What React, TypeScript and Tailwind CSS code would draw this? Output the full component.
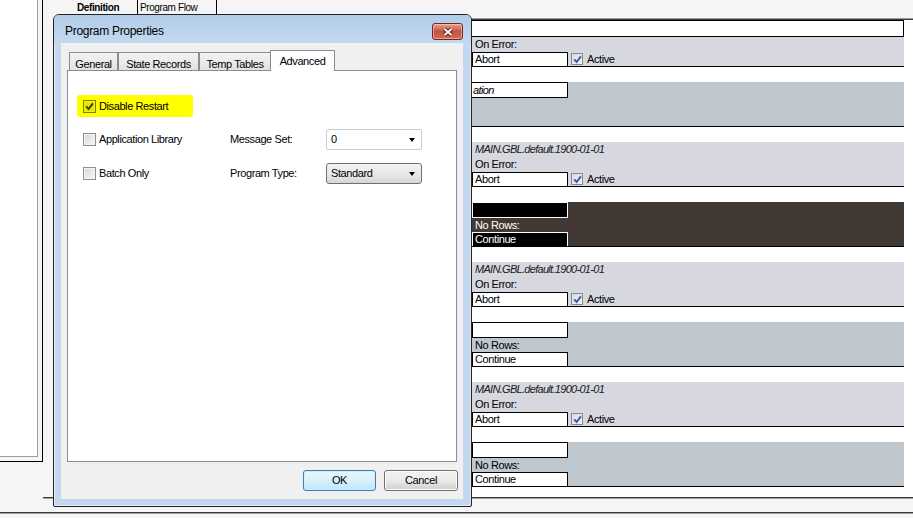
import React from "react";

function Tick({ color }: { color: string }) {
  return (
    <svg viewBox="0 0 9 9" className="h-[9px] w-[9px]">
      <path d="M1.2 4.4 L3.6 7 L7.9 1.4" fill="none" stroke={color} strokeWidth="1.9" />
    </svg>
  );
}

function Box({ checked, hl }: { checked?: boolean; hl?: boolean }) {
  return (
    <span
      className={`flex h-[13px] w-[13px] shrink-0 items-center justify-center border ${
        hl
          ? "border-[#7d7d00] bg-[#e6e600] shadow-[inset_0_0_0_1px_#f5f500]"
          : "border-[#8e8f8f] bg-gradient-to-br from-[#d6d6d6] to-[#fafafa] shadow-[inset_0_0_0_1px_#f4f4f4]"
      }`}
    >
      {checked && <Tick color={hl ? "#3c3c00" : "#4a5f97"} />}
    </span>
  );
}

function ActiveCheck() {
  return (
    <div className="ml-[3px] mt-px flex items-center">
      <span className="flex h-[12px] w-[12px] items-center justify-center border border-[#8b8b8b] bg-gradient-to-br from-[#d3d8e2] to-[#f5f6f8]">
        <Tick color="#3b5ca6" />
      </span>
      <span className="ml-[4px] leading-[12px]">Active</span>
    </div>
  );
}

function GrayBlock() {
  return (
    <div className="flex h-[45px] flex-col border-b border-black bg-[#d6d7df]">
      <div className="h-[15px] pl-[3px] text-[11px] italic leading-[15px] tracking-[-0.7px] text-[#1a1a1a]">
        MAIN.GBL.default.1900-01-01
      </div>
      <div className="h-[15px] pl-[3px] leading-[15px]">On Error:</div>
      <div className="flex h-[14px] items-start">
        <div className="h-[14px] w-[96px] border-x border-t border-black bg-white pl-[2px] leading-[13px]">Abort</div>
        <ActiveCheck />
      </div>
    </div>
  );
}

function RowsBlock({ dark }: { dark?: boolean }) {
  const field = dark ? "border-white bg-black text-white" : "border-black bg-white";
  return (
    <div className={`flex h-[45px] flex-col border-b border-black ${dark ? "bg-[#433934] text-white" : "bg-[#bec8ce]"}`}>
      <div className={`h-[16px] w-[96px] border ${field}`} />
      <div className="h-[14px] pl-[3px] leading-[14px]">No Rows:</div>
      <div className={`h-[14px] w-[96px] border-x border-t pl-[2px] leading-[13px] ${field}`}>Continue</div>
    </div>
  );
}

function Gap() {
  return <div className="h-[15px]" />;
}

function Select({ value, raised }: { value: string; raised?: boolean }) {
  return (
    <div
      className={`flex h-[21px] w-[96px] items-center justify-between pl-[4px] pr-[6px] ${
        raised
          ? "rounded-[3px] border border-[#707070] bg-gradient-to-b from-[#f2f2f2] via-[#e9e9e9] to-[#d6d6d6]"
          : "rounded-[2px] border border-[#c9ccd1] bg-white"
      }`}
    >
      <span className="text-[11px] leading-[13px]">{value}</span>
      <span className="h-0 w-0 border-x-[3.5px] border-t-[4px] border-x-transparent border-t-black" />
    </div>
  );
}

function Tab({ label, w, active }: { label: string; w: string; active?: boolean }) {
  return active ? (
    <div className={`relative z-10 -mb-px -ml-px flex h-[21px] ${w} justify-center border-x border-t border-[#898c95] bg-white pt-[4px] leading-[13px]`}>
      {label}
    </div>
  ) : (
    <div className={`flex h-[18px] ${w} justify-center border-x border-t border-[#898c95] bg-gradient-to-b from-[#f3f3f3] to-[#e2e2e2] pt-[5px] leading-[13px]`}>
      {label}
    </div>
  );
}

function Dialog() {
  return (
    <div className="absolute left-[53px] top-[14px] flex h-[493px] w-[419px] flex-col rounded-t-[6px] rounded-b-[2px] border border-[#222] bg-[#c2d8ee] shadow-[inset_0_0_0_1px_#e2edf8]">
      <div className="flex h-[28px] items-start justify-between rounded-t-[5px] bg-gradient-to-b from-[#b2cce8] to-[#c3d9ef] pl-[11px] pr-[8px] pt-[8px]">
        <span className="text-[12px] leading-[17px] tracking-[-0.3px]">Program Properties</span>
        <div className="flex h-[17px] w-[31px] items-center justify-center rounded-[3px] border border-[#6d2a24] bg-gradient-to-b from-[#e6a497] via-[#c64f3e] to-[#d36d57] shadow-[inset_0_0_0_1px_rgba(255,220,210,0.5)]">
          <svg viewBox="0 0 12 10" className="h-[10px] w-[12px]">
            <path d="M2.5 2 L9.5 8 M9.5 2 L2.5 8" stroke="#5a1a14" strokeWidth="3.8" />
            <path d="M2.5 2 L9.5 8 M9.5 2 L2.5 8" stroke="#ffffff" strokeWidth="2" />
          </svg>
        </div>
      </div>
      <div className="ml-[7px] flex h-[456px] w-[402px] flex-col bg-[#f0f0f0] pl-[6px] pt-[7px]">
        <div className="flex h-[20px] items-end pl-[2px]">
          <Tab label="General" w="w-[49px]" />
          <Tab label="State Records" w="w-[81px]" />
          <Tab label="Temp Tables" w="w-[72px]" />
          <Tab label="Advanced" w="w-[65px]" active />
        </div>
        <div className="flex h-[392px] w-[390px] flex-col border border-[#898c95] bg-white pl-[9px] pt-[24px]">
          <div className="flex h-[22px] w-[116px] items-center rounded-[3px] bg-[#ffff00] pl-[6px]">
            <Box checked hl />
            <span className="ml-[3px] leading-[13px]">Disable Restart</span>
          </div>
          <div className="mt-[12px] flex h-[21px] items-center pl-[6px]">
            <div className="flex w-[147px] items-center">
              <Box />
              <span className="ml-[3px] leading-[13px]">Application Library</span>
            </div>
            <span className="w-[96px] leading-[13px]">Message Set:</span>
            <Select value="0" />
          </div>
          <div className="mt-[13px] flex h-[21px] items-center pl-[6px]">
            <div className="flex w-[147px] items-center">
              <Box />
              <span className="ml-[3px] leading-[13px]">Batch Only</span>
            </div>
            <span className="w-[96px] leading-[13px]">Program Type:</span>
            <Select value="Standard" raised />
          </div>
        </div>
        <div className="mt-[8px] flex justify-end gap-[8px] pr-[5px]">
          <button className="h-[21px] w-[73px] rounded-[3px] border border-[#3c7fb1] bg-gradient-to-b from-[#eaf6fd] via-[#d9f0fc] to-[#bee6fd] leading-[13px] shadow-[inset_0_0_0_1px_#cdeeff]">
            OK
          </button>
          <button className="h-[21px] w-[74px] rounded-[3px] border border-[#707070] bg-gradient-to-b from-[#f2f2f2] via-[#ebebeb] to-[#cfcfcf] leading-[13px] shadow-[inset_0_0_0_1px_#fcfcfc]">
            Cancel
          </button>
        </div>
      </div>
    </div>
  );
}

export default function App() {
  return (
    <div className="relative h-[518px] w-[913px] overflow-hidden bg-[#f5f5f5] font-['Liberation_Sans',Arial,sans-serif] text-[11px] tracking-[-0.4px] text-black">
      <div className="flex h-[512px]">
        {/* left tree pane */}
        <div className="h-[462px] w-[43px] shrink-0 border-b border-r border-black">
          <div className="h-[457px] w-[38px] border-b border-r border-[#9c9cb4] bg-white" />
        </div>

        {/* right definition pane */}
        <div className="flex flex-1 flex-col">
          <div className="flex h-[18px] items-start">
            <div className="ml-[34px] mt-[2px] w-[60px] text-[10px] font-bold leading-[11px]">Definition</div>
            <div className="h-[14px] w-[80px] overflow-hidden border-x border-black pl-[2px] pt-[2px] text-[10px] leading-[12px]">
              Program Flow
            </div>
          </div>
          <div className="ml-[10px] h-px bg-[#9a9a9a]" />
          <div className="ml-[10px] h-px bg-[#3a3a3a]" />
          <div className="ml-[10px] flex h-[477px] flex-col bg-white pl-[419px]">
            <div className="w-[432px]">
              <div className="h-[17px] border-y border-r border-black bg-white" />
              <div className="flex h-[30px] flex-col border-b border-black bg-[#d6d7df]">
                <div className="h-[15px] pl-[3px] leading-[15px]">On Error:</div>
                <div className="flex h-[14px] items-start">
                  <div className="h-[14px] w-[96px] border-x border-t border-black bg-white pl-[2px] leading-[13px]">Abort</div>
                  <ActiveCheck />
                </div>
              </div>
              <Gap />
              <div className="h-[45px] border-b border-black bg-[#bec8ce]">
                <div className="h-[16px] w-[96px] border-y border-r border-black bg-white pl-px leading-[14px]">
                  <span className="text-[11px] italic tracking-[-0.6px]">ation</span>
                </div>
              </div>
              <Gap />
              <GrayBlock />
              <Gap />
              <RowsBlock dark />
              <Gap />
              <GrayBlock />
              <Gap />
              <RowsBlock />
              <Gap />
              <GrayBlock />
              <Gap />
              <RowsBlock />
            </div>
          </div>
          <div className="h-px bg-[#3a3a3a]" />
          <div className="h-px bg-[#a0a0a0]" />
        </div>
      </div>
      <div className="h-px bg-[#3a3a3a]" />
      <div className="h-px bg-[#a0a0a0]" />

      <Dialog />
    </div>
  );
}
